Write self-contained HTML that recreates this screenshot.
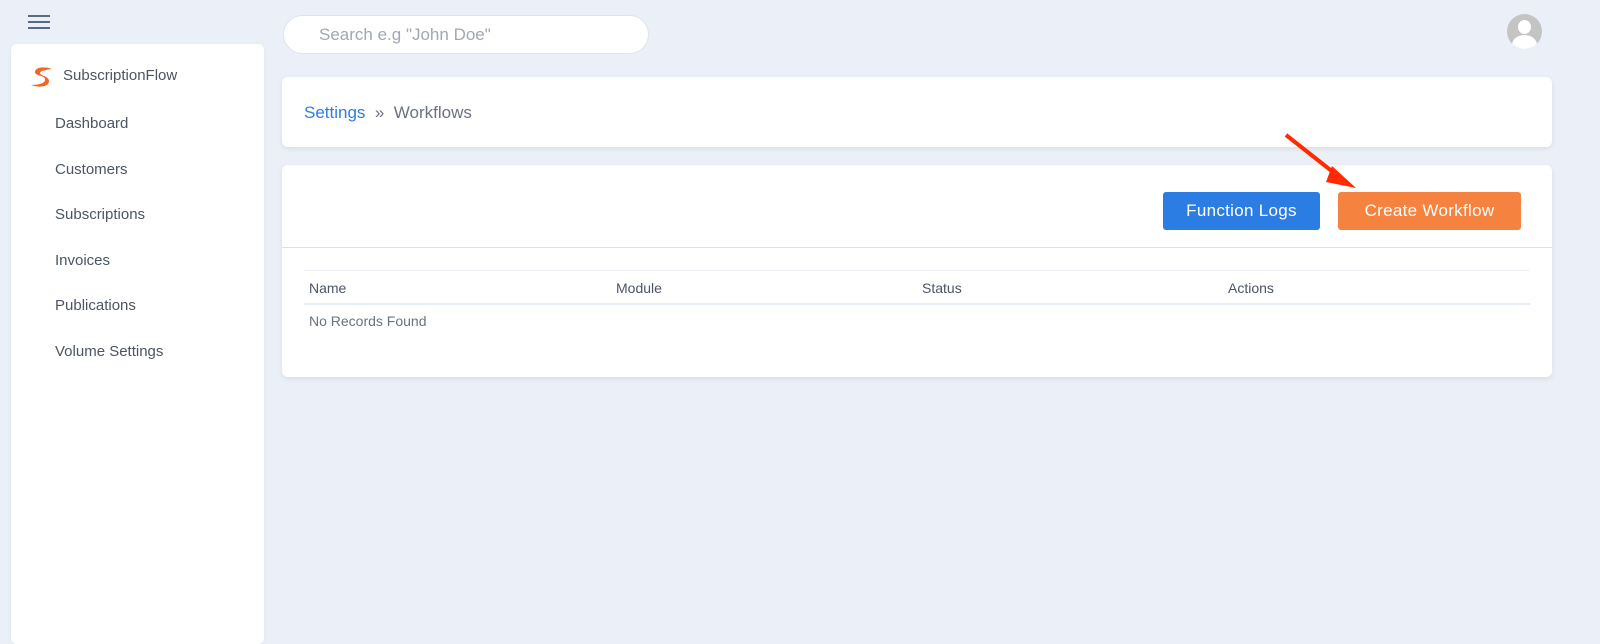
<!DOCTYPE html>
<html><head><style>
*{box-sizing:border-box;margin:0;padding:0}
body{width:1600px;height:631px;background:#ebf0f8;font-family:"Liberation Sans",sans-serif;position:relative;overflow:hidden;color:#4a5568}
.abs{position:absolute}
.side{left:11px;top:44px;width:253px;height:600px;background:#fff;border-radius:6px;box-shadow:0 2px 6px rgba(0,0,0,.05)}
.nav{position:absolute;left:44px;font-size:15px;color:#4b5563}
.card{background:#fff;border-radius:6px;box-shadow:0 2px 6px rgba(0,0,0,.08)}
.btn{position:absolute;top:192px;height:38px;border-radius:3px;color:#fff;font-size:17px;text-align:center;line-height:38px;letter-spacing:.3px}
.th{position:absolute;top:280px;font-size:14px;color:#4a5568}
</style></head><body>
<div class="abs" style="left:28px;top:15px;width:22px">
<div style="height:2px;background:#5a6b80;margin-bottom:4px"></div>
<div style="height:2px;background:#5a6b80;margin-bottom:4px"></div>
<div style="height:2px;background:#5a6b80"></div></div>
<div class="abs side">
<svg class="abs" style="left:19px;top:22px" width="24" height="22" viewBox="0 0 24 22"><path d="M22 3C15 0 5 1 5 6c0 4 9 3 10 7 1 4-6 6-14 6 8 3 18 2 18-4 0-5-9-5-9-8 0-2 5-3 12-4z" fill="#f26522"/></svg>
<div class="abs" style="left:52px;top:23px;font-size:15px;color:#4b5563">SubscriptionFlow</div>
<div class="nav" style="top:71px">Dashboard</div>
<div class="nav" style="top:117px">Customers</div>
<div class="nav" style="top:162px">Subscriptions</div>
<div class="nav" style="top:208px">Invoices</div>
<div class="nav" style="top:253px">Publications</div>
<div class="nav" style="top:299px">Volume Settings</div>
</div>
<div class="abs" style="left:283px;top:15px;width:366px;height:39px;background:#fff;border:1px solid #dfe4ec;border-radius:20px;padding-left:35px;line-height:37px;font-size:17px;color:#a0a8b4">Search e.g "John Doe"</div>
<div class="abs" style="left:1507px;top:14px;width:35px;height:35px;border-radius:50%;background:#c4c4c4;overflow:hidden">
<div class="abs" style="left:11px;top:6px;width:13px;height:14px;border-radius:50%;background:#fff"></div>
<div class="abs" style="left:5px;top:21px;width:25px;height:20px;border-radius:50%;background:#fff"></div></div>
<div class="abs card" style="left:282px;top:77px;width:1270px;height:70px">
<div class="abs" style="left:22px;top:26px;font-size:17px"><span style="color:#2b7de0">Settings</span> <span style="color:#6b7280">&nbsp;»&nbsp; Workflows</span></div></div>
<div class="abs card" style="left:282px;top:165px;width:1270px;height:212px">
<div class="abs" style="left:0;top:82px;width:1270px;height:1px;background:#d9e2ee"></div>
<div class="abs" style="left:22px;top:105px;width:1226px;height:1px;background:#edf1f6"></div>
<div class="abs" style="left:22px;top:138px;width:1226px;height:2px;background:#e8eef6"></div>
<div class="abs" style="left:27px;top:148px;font-size:14px;color:#6b7280">No Records Found</div>
</div>
<div class="th" style="left:309px">Name</div>
<div class="th" style="left:616px">Module</div>
<div class="th" style="left:922px">Status</div>
<div class="th" style="left:1228px">Actions</div>
<div class="btn" style="left:1163px;width:157px;background:#2b7de3">Function Logs</div>
<div class="btn" style="left:1338px;width:183px;background:#f5823e">Create Workflow</div>
<svg class="abs" style="left:1280px;top:130px" width="80" height="65" viewBox="0 0 80 65"><line x1="6" y1="5" x2="58" y2="46" stroke="#ff2a00" stroke-width="4"/><polygon points="52,36 76,58 46,52" fill="#ff2a00"/></svg>
</body></html>
